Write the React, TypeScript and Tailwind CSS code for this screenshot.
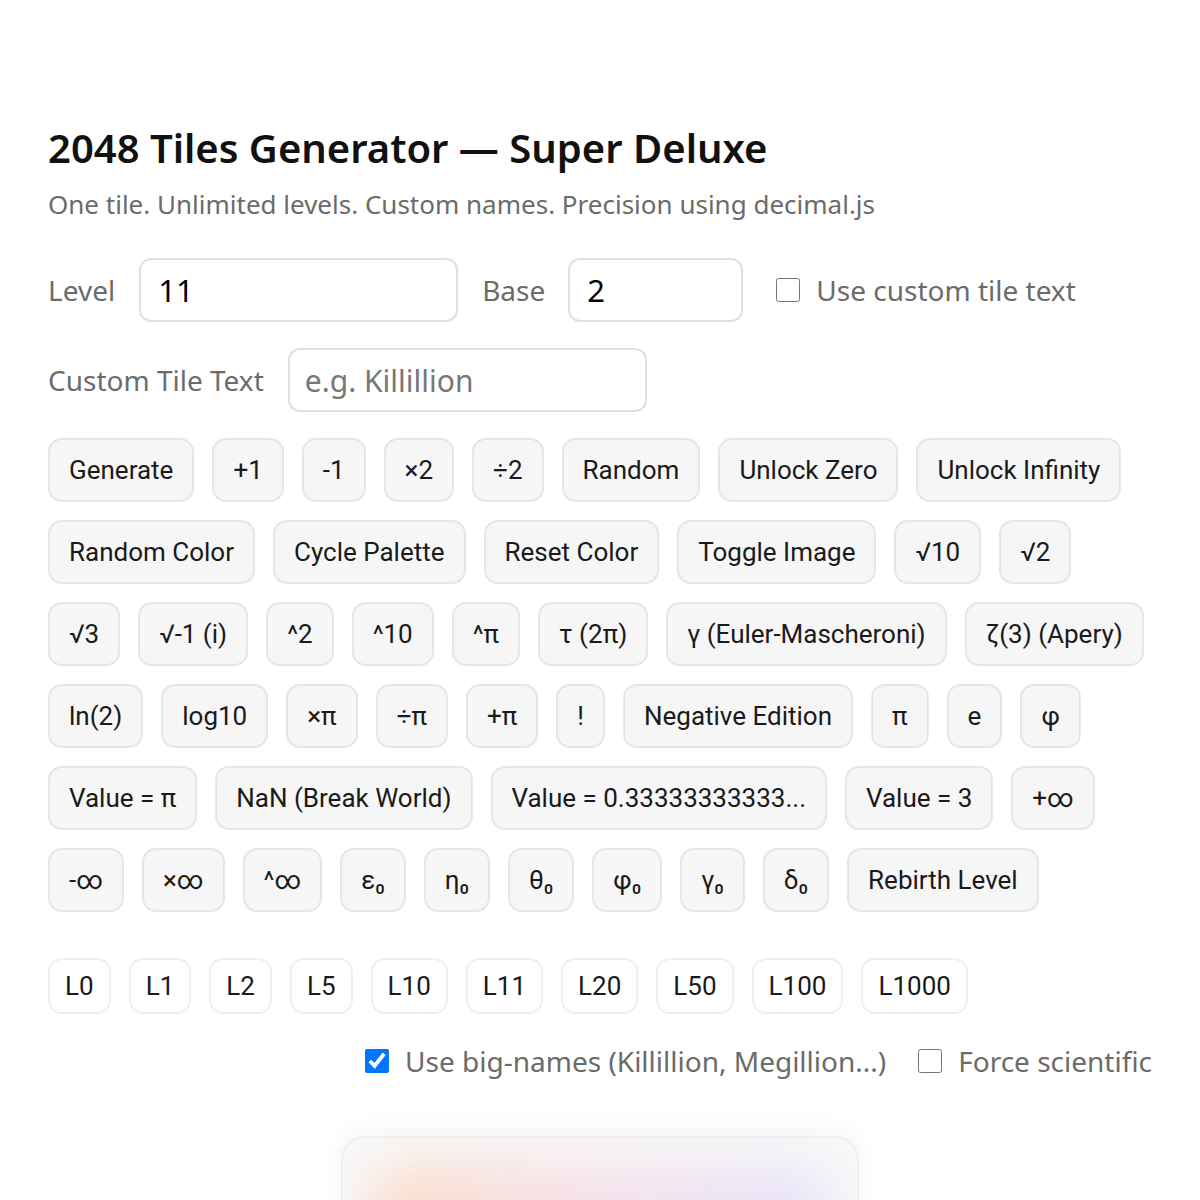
import { useState } from "react";

const actions = [
  "Generate", "+1", "-1", "×2", "÷2", "Random", "Unlock Zero", "Unlock Infinity",
  "Random Color", "Cycle Palette", "Reset Color", "Toggle Image", "√10", "√2",
  "√3", "√-1 (i)", "^2", "^10", "^π", "τ (2π)", "γ (Euler-Mascheroni)", "ζ(3) (Apery)",
  "ln(2)", "log10", "×π", "÷π", "+π", "!", "Negative Edition", "π", "e", "φ",
  "Value = π", "NaN (Break World)", "Value = 0.33333333333...", "Value = 3", "+∞",
  "-∞", "×∞", "^∞", "ε₀", "η₀", "θ₀", "φ₀", "γ₀", "δ₀", "Rebirth Level",
];

const levels = [0, 1, 2, 5, 10, 11, 20, 50, 100, 1000];

export default function App() {
  const [level, setLevel] = useState("11");
  const [base, setBase] = useState("2");
  const [useCustom, setUseCustom] = useState(false);
  const [bigNames, setBigNames] = useState(true);
  const [forceSci, setForceSci] = useState(false);

  return (
    <div className="min-h-screen bg-white font-['Noto_Sans',sans-serif] px-12 pt-[123px]">
      <h1 className="text-[40px] font-semibold text-[#111] leading-tight">
        2048 Tiles Generator — Super Deluxe
      </h1>
      <p className="mt-[12px] text-[26px] text-[#6b6b6b]">
        One tile. Unlimited levels. Custom names. Precision using decimal.js
      </p>

      {/* Level / base */}
      <div className="mt-[34px] flex items-center">
        <label className="text-[28px] text-[#6b6b6b] mr-6">Level</label>
        <input
          value={level}
          onChange={(e) => setLevel(e.target.value)}
          className="w-[319px] h-16 rounded-[12px] border-2 border-[#e0e0e0] px-[17px] text-[31px] text-black outline-none"
        />
        <label className="text-[28px] text-[#6b6b6b] ml-[24px] mr-[23px]">Base</label>
        <input
          value={base}
          onChange={(e) => setBase(e.target.value)}
          className="w-[175px] h-16 rounded-[12px] border-2 border-[#e0e0e0] px-[17px] text-[31px] text-black outline-none"
        />
        <label className="ml-[33px] flex items-center gap-4 text-[28px] text-[#6b6b6b]">
          <input
            type="checkbox"
            checked={useCustom}
            onChange={(e) => setUseCustom(e.target.checked)}
            className="w-6 h-6"
          />
          Use custom tile text
        </label>
      </div>

      <div className="mt-[26px] flex items-center">
        <label className="text-[28px] text-[#6b6b6b] mr-6">Custom Tile Text</label>
        <input
          placeholder="e.g. Killillion"
          className="w-[359px] h-16 rounded-[12px] border-2 border-[#e0e0e0] px-[15px] text-[30px] text-black placeholder:text-[#777] outline-none"
        />
      </div>

      {/* Action buttons */}
      <div className="mt-[26px] flex flex-wrap gap-[18px] w-[1108px]">
        {actions.map((a) => (
          <button
            key={a}
            className="h-16 px-[19px] rounded-[14px] border-2 border-[#e6e6e6] bg-[#f6f6f6] text-[26px] text-[#1a1a1a] font-['Roboto',sans-serif] leading-none"
          >
            {a}
          </button>
        ))}
      </div>

      {/* Level shortcuts */}
      <div className="mt-[46px] flex flex-wrap gap-[18px]">
        {levels.map((l) => (
          <button
            key={l}
            className="h-[56px] px-[15px] rounded-[14px] border-2 border-[#efefef] bg-white text-[26px] text-[#1a1a1a] font-['Roboto',sans-serif] leading-none"
          >
            L{l}
          </button>
        ))}
      </div>

      <div className="mt-[26px] flex items-center justify-end gap-8 w-[1104px]">
        <label className="flex items-center gap-4 text-[28px] text-[#6b6b6b]">
          <input
            type="checkbox"
            checked={bigNames}
            onChange={(e) => setBigNames(e.target.checked)}
            className="w-6 h-6"
          />
          Use big-names (Killillion, Megillion...)
        </label>
        <label className="flex items-center gap-4 text-[28px] text-[#6b6b6b]">
          <input
            type="checkbox"
            checked={forceSci}
            onChange={(e) => setForceSci(e.target.checked)}
            className="w-6 h-6"
          />
          Force scientific
        </label>
      </div>

      {/* Tile preview */}
      <div className="mt-[54px] flex justify-center">
        <div className="relative w-[518px] h-[300px] rounded-[24px] border-2 border-[#efefef] bg-[#f8f8f8] overflow-hidden shadow-[0_-8px_24px_rgba(0,0,0,0.04)]">
          <div className="absolute inset-x-[24px] top-[26px] h-[220px] rounded-[48px] blur-xl bg-gradient-to-r from-[#fbdcc8] via-[#f5e1ea] to-[#e6e4fa]" />
        </div>
      </div>
    </div>
  );
}
